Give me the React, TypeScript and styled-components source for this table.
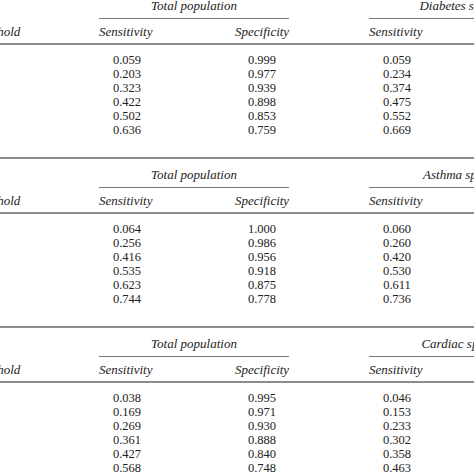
import { createGlobalStyle, styled } from "styled-components";

const GlobalStyle = createGlobalStyle`
  html, body {
    margin: 0;
    padding: 0;
    background: #ffffff;
    overflow: hidden;
  }
`;

const COLUMNS = "135px 56px 80px 54px 80px 56px 80px 54px";

interface Section {
  subgroup: string;
  total: { sens: string[]; spec: string[] };
  sub: string[];
}

const sections: Section[] = [
  {
    subgroup: "Diabetes specific",
    total: {
      sens: ["0.059", "0.203", "0.323", "0.422", "0.502", "0.636"],
      spec: ["0.999", "0.977", "0.939", "0.898", "0.853", "0.759"],
    },
    sub: ["0.059", "0.234", "0.374", "0.475", "0.552", "0.669"],
  },
  {
    subgroup: "Asthma specific",
    total: {
      sens: ["0.064", "0.256", "0.416", "0.535", "0.623", "0.744"],
      spec: ["1.000", "0.986", "0.956", "0.918", "0.875", "0.778"],
    },
    sub: ["0.060", "0.260", "0.420", "0.530", "0.611", "0.736"],
  },
  {
    subgroup: "Cardiac specific",
    total: {
      sens: ["0.038", "0.169", "0.269", "0.361", "0.427", "0.568"],
      spec: ["0.995", "0.971", "0.930", "0.888", "0.840", "0.748"],
    },
    sub: ["0.046", "0.153", "0.233", "0.302", "0.358", "0.463"],
  },
];

export default function App() {
  return (
    <>
      <GlobalStyle />
      <Page>
        {sections.map((section) => (
          <Table key={section.subgroup}>
            <GroupRow>
              <GroupTitle $column={2}>Total population</GroupTitle>
              <GroupTitle $column={6}>{section.subgroup}</GroupTitle>
            </GroupRow>

            <HeadRow>
              <ThresholdLabel>Threshold</ThresholdLabel>
              <HeadLabel $align="left">Sensitivity</HeadLabel>
              <span />
              <HeadLabel $align="right">Specificity</HeadLabel>
              <span />
              <HeadLabel $align="left">Sensitivity</HeadLabel>
              <span />
              <HeadLabel $align="right">Specificity</HeadLabel>
            </HeadRow>

            <Body>
              {section.total.sens.map((value, index) => (
                <DataRow key={index}>
                  <span />
                  <Value>{value}</Value>
                  <span />
                  <Value>{section.total.spec[index]}</Value>
                  <span />
                  <Value>{section.sub[index]}</Value>
                </DataRow>
              ))}
            </Body>
          </Table>
        ))}
      </Page>
    </>
  );
}

const Page = styled.div`
  width: 620px;
  margin: -12px 0 0 -36px;
  color: #232323;
  font-family: "Liberation Serif", "Times New Roman", serif;
`;

const Table = styled.section`
  display: flex;
  flex-direction: column;
  border-top: 2px solid #8c8c8c;
`;

const Row = styled.div`
  display: grid;
  grid-template-columns: ${COLUMNS};
`;

const GroupRow = styled(Row)`
  padding-top: 9px;
`;

const GroupTitle = styled.div<{ $column: number }>`
  grid-column: ${(p) => p.$column} / span 3;
  grid-row: 1;
  padding-bottom: 5px;
  border-bottom: 1px solid #7a7a7a;
  font-size: 13px;
  font-style: italic;
  line-height: 14px;
  text-align: center;
  white-space: nowrap;
`;

const HeadRow = styled(Row)`
  padding: 6px 0 4px;
  border-bottom: 2px solid #8c8c8c;
`;

const HeadLabel = styled.span<{ $align?: "left" | "right" }>`
  font-size: 13px;
  font-style: italic;
  line-height: 14px;
  white-space: nowrap;
  text-align: ${(p) => p.$align ?? "left"};
`;

const ThresholdLabel = styled(HeadLabel)`
  padding-left: 4px;
`;

const Body = styled.div`
  display: flex;
  flex-direction: column;
  padding: 8px 0 20px;
`;

const DataRow = styled(Row)`
  line-height: 14px;
`;

const Value = styled.span`
  font-size: 12.5px;
  text-align: center;
`;
